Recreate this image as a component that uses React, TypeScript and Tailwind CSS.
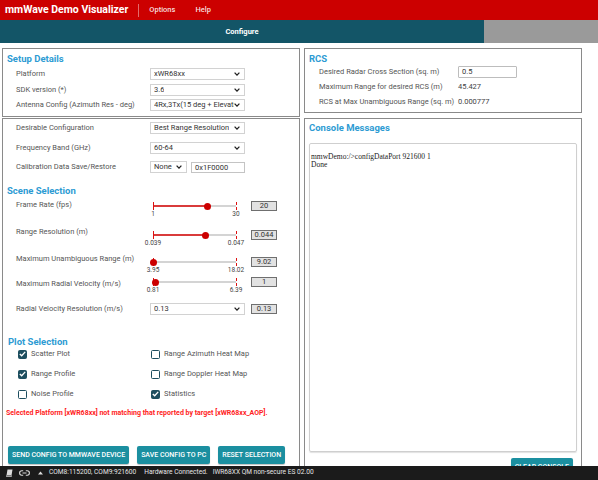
import React from "react";

function Chevron() {
  return (
    <svg width="6" height="4" viewBox="0 0 6 4" className="shrink-0">
      <path d="M0.6 0.6 L3 3.1 L5.4 0.6" fill="none" stroke="#222" strokeWidth="1.3" />
    </svg>
  );
}

function Select({ value, narrow }: { value: string; narrow?: boolean }) {
  return (
    <div
      className={`${narrow ? "w-[37px]" : "w-[95px]"} h-[12px] shrink-0 border border-[#d2d2d2] bg-white flex items-center justify-between pl-[3px] pr-[4px] text-[7.5px] text-[#333] leading-none overflow-hidden`}
    >
      <span className="whitespace-nowrap overflow-hidden">{value}</span>
      <Chevron />
    </div>
  );
}

function ValBox({ v }: { v: string }) {
  return (
    <div className="w-[26px] h-[10px] shrink-0 border border-[#6f6f6f] bg-[#e2e2e2] text-[7.5px] leading-[8px] text-center text-[#333]">
      {v}
    </div>
  );
}

function Slider({ frac, min, max, v }: { frac: number; min: string; max: string; v: string }) {
  const L = 3;
  const R = 86;
  const x = L + frac * (R - L);
  return (
    <div className="flex items-start">
      <div className="relative w-[95px] h-[20px] shrink-0">
        <div className="absolute top-[6px] h-[2px] bg-[#d4d4d4]" style={{ left: L, width: R - L }} />
        <div className="absolute top-[6px] h-[2px] bg-[#d93b3b]" style={{ left: L, width: x - L }} />
        <div className="absolute left-[3px] top-[3px] w-[1px] h-[8px] bg-[#d11]" />
        <div className="absolute left-[86px] top-[3px] w-[1px] h-[8px] border-l border-dashed border-[#d11]" />
        <div
          className="absolute w-[7px] h-[7px] rounded-full bg-[#cc0000]"
          style={{ left: x - 3.5, top: 3.5 }}
        />
        <div className="absolute left-[3px] top-[10px] -translate-x-1/2 text-[6.5px] leading-[10px] text-[#444] whitespace-nowrap">
          {min}
        </div>
        <div className="absolute left-[86px] top-[10px] -translate-x-1/2 text-[6.5px] leading-[10px] text-[#444] whitespace-nowrap">
          {max}
        </div>
      </div>
      <div className="ml-[6px] mt-[2px]">
        <ValBox v={v} />
      </div>
    </div>
  );
}

function Check({ on, label }: { on: boolean; label: string }) {
  return (
    <div className="flex items-center h-[12px] w-[133px]">
      <div
        className={`w-[9px] h-[9px] rounded-[1.5px] border-[1.5px] border-[#1d4e5f] flex items-center justify-center ${on ? "bg-[#1d4e5f]" : "bg-white"}`}
      >
        {on && (
          <svg width="7" height="6" viewBox="0 0 7 6">
            <path d="M0.8 3 L2.7 4.8 L6.2 0.9" fill="none" stroke="white" strokeWidth="1.3" />
          </svg>
        )}
      </div>
      <span className="ml-[4px] text-[7.5px] text-[#555] leading-none">{label}</span>
    </div>
  );
}

function Heading({ children, cls }: { children: React.ReactNode; cls?: string }) {
  return (
    <div className={`text-[9.5px] font-bold leading-[12px] text-[#2d9bd3] ${cls ?? ""}`}>{children}</div>
  );
}

function Label({ children, w }: { children: React.ReactNode; w?: boolean }) {
  return (
    <div className={`${w ? "w-[139px]" : "w-[134px]"} shrink-0 text-[7.5px] text-[#555] leading-[12px] whitespace-nowrap`}>
      {children}
    </div>
  );
}

function Btn({ children }: { children: React.ReactNode }) {
  return (
    <div className="h-[18px] px-[4px] rounded-[2px] bg-[#1b8fa0] text-white text-[7px] font-medium leading-[18px] whitespace-nowrap shadow-[0_1px_1px_rgba(0,0,0,0.25)]">
      {children}
    </div>
  );
}

export default function App() {
  return (
    <div className="w-[598px] h-[480px] flex flex-col overflow-hidden bg-white [font-family:Roboto,'Liberation_Sans',sans-serif]">
      {/* header */}
      <div className="h-[20px] shrink-0 bg-[#cc0000] flex items-center">
        <div className="pl-[5px] text-[10.5px] font-bold text-white leading-none whitespace-nowrap">mmWave Demo Visualizer</div>
        <div className="ml-[10px] w-[1px] h-[13px] bg-[#e36b6b]" />
        <div className="ml-[10px] text-[7.5px] text-[#f6dede] font-medium">Options</div>
        <div className="ml-[20px] text-[7.5px] text-[#f6dede] font-medium">Help</div>
      </div>
      {/* nav */}
      <div className="h-[23px] shrink-0 flex">
        <div className="w-[484px] bg-[#135567] flex items-center justify-center">
          <span className="text-[7.5px] font-bold text-white">Configure</span>
        </div>
        <div className="flex-1 bg-[#9a9a9a]" />
      </div>
      {/* main */}
      <div className="flex-1 overflow-hidden pt-[5px] pl-[2px]">
        <div className="grid grid-cols-[298px_278px] gap-x-[4px] gap-y-[1px] items-start">
          {/* Setup Details */}
          <div className="border border-[#8a8a8a] pt-[4px] pb-[5px] pl-[4px]">
            <Heading>Setup Details</Heading>
            <div className="pl-[9px]">
              <div className="flex items-center mt-[3px]">
                <Label>Platform</Label>
                <Select value="xWR68xx" />
              </div>
              <div className="flex items-center mt-[4px]">
                <Label>SDK version (*)</Label>
                <Select value="3.6" />
              </div>
              <div className="flex items-center mt-[3px]">
                <Label>Antenna Config (Azimuth Res - deg)</Label>
                <Select value="4Rx,3Tx(15 deg + Elevation)" />
              </div>
            </div>
          </div>
          {/* RCS */}
          <div className="border border-[#8a8a8a] pt-[4px] pb-[4px] pl-[4px]">
            <Heading>RCS</Heading>
            <div className="pl-[10px]">
              <div className="flex items-center mt-[1px]">
                <Label w>Desired Radar Cross Section (sq. m)</Label>
                <div className="w-[59px] h-[12px] border border-[#bdbdbd] rounded-[1px] bg-white pl-[3px] text-[7.5px] leading-[10px] text-[#333]">0.5</div>
              </div>
              <div className="flex items-center mt-[3px]">
                <Label w>Maximum Range for desired RCS (m)</Label>
                <span className="text-[7.5px] text-[#444]">45.427</span>
              </div>
              <div className="flex items-center mt-[3px]">
                <Label w>RCS at Max Unambiguous Range (sq. m)</Label>
                <span className="text-[7.5px] text-[#444]">0.000777</span>
              </div>
            </div>
          </div>
          {/* left main panel */}
          <div className="border border-[#8a8a8a] pt-[3px] pb-[20px]">
            <div className="pl-[13px]">
              <div className="flex items-center h-[12px]">
                <Label>Desirable Configuration</Label>
                <Select value="Best Range Resolution" />
              </div>
              <div className="flex items-center h-[12px] mt-[8px]">
                <Label>Frequency Band (GHz)</Label>
                <Select value="60-64" />
              </div>
              <div className="flex items-center h-[12px] mt-[7px]">
                <Label>Calibration Data Save/Restore</Label>
                <Select value="None" narrow />
                <div className="ml-[4px] w-[54px] h-[11px] border border-[#c4c4c4] bg-white pl-[3px] text-[7.5px] leading-[9px] text-[#333]">0x1F0000</div>
              </div>
            </div>
            <Heading cls="mt-[12px] pl-[4px]">Scene Selection</Heading>
            <div className="pl-[13px] mt-[2px]">
              <div className="flex items-start h-[27px]">
                <Label>Frame Rate (fps)</Label>
                <div className="mt-[0px]">
                  <Slider frac={0.655} min="1" max="30" v="20" />
                </div>
              </div>
              <div className="flex items-start h-[27px]">
                <Label>Range Resolution (m)</Label>
                <div className="mt-[2px]">
                  <Slider frac={0.63} min="0.039" max="0.047" v="0.044" />
                </div>
              </div>
              <div className="flex items-start h-[25px]">
                <Label>Maximum Unambiguous Range (m)</Label>
                <div className="mt-[2px]">
                  <Slider frac={0.01} min="3.95" max="18.02" v="9.02" />
                </div>
              </div>
              <div className="flex items-start h-[25px]">
                <Label>Maximum Radial Velocity (m/s)</Label>
                <div className="-mt-[3px]">
                  <Slider frac={0.035} min="0.81" max="6.39" v="1" />
                </div>
              </div>
              <div className="flex items-center h-[12px]">
                <Label>Radial Velocity Resolution (m/s)</Label>
                <Select value="0.13" />
                <div className="ml-[6px]">
                  <ValBox v="0.13" />
                </div>
              </div>
            </div>
            <Heading cls="mt-[21px] pl-[5px] leading-[11px]">Plot Selection</Heading>
            <div className="pl-[15px]">
              <div className="flex">
                <Check on label="Scatter Plot" />
                <Check on={false} label="Range Azimuth Heat Map" />
              </div>
              <div className="flex mt-[8px]">
                <Check on label="Range Profile" />
                <Check on={false} label="Range Doppler Heat Map" />
              </div>
              <div className="flex mt-[8px]">
                <Check on={false} label="Noise Profile" />
                <Check on label="Statistics" />
              </div>
            </div>
            <div className="mt-[7px] pl-[3px] text-[7px] font-bold leading-[12px] text-[#ff2222] whitespace-nowrap">
              Selected Platform [xWR68xx] not matching that reported by target [xWR68xx_AOP].
            </div>
            <div className="mt-[27px] pl-[5px] flex gap-[8px]">
              <Btn>SEND CONFIG TO MMWAVE DEVICE</Btn>
              <Btn>SAVE CONFIG TO PC</Btn>
              <Btn>RESET SELECTION</Btn>
            </div>
          </div>
          {/* console */}
          <div className="border border-[#8a8a8a] pt-[3px] px-[4px] pb-[10px]">
            <Heading>Console Messages</Heading>
            <div className="mt-[9px] h-[309px] border border-[#cfcfcf] rounded-[2px] shadow-[0_1px_1px_rgba(0,0,0,0.12)] pt-[9px] pl-[1px] [font-family:'Liberation_Serif',serif] text-[7.5px] leading-[8px] text-[#222]">
              <div>mmwDemo:/&gt;configDataPort 921600 1</div>
              <div>Done</div>
            </div>
            <div className="flex justify-end mt-[6px] pr-[4px]">
              <Btn>CLEAR CONSOLE</Btn>
            </div>
          </div>
        </div>
      </div>
      {/* status bar */}
      <div className="h-[14px] shrink-0 bg-[#1b1b1b] flex items-center text-[6.6px] text-[#e6e6e6] whitespace-nowrap">
        <svg width="7" height="8" viewBox="0 0 7 8" className="ml-[6px]">
          <path d="M1.5 0.5 H6.5 L5.5 6.5 H0.5 Z" fill="#dcdcdc" />
          <path d="M0.5 6.5 L0.4 7.6 H5.4 L5.5 6.5" fill="none" stroke="#dcdcdc" strokeWidth="0.8" />
        </svg>
        <svg width="11" height="6" viewBox="0 0 11 6" className="ml-[6px]">
          <path d="M4.2 0.8 H2.8 A2.2 2.2 0 0 0 2.8 5.2 H4.2 M6.8 0.8 H8.2 A2.2 2.2 0 0 1 8.2 5.2 H6.8 M3.5 3 H7.5" fill="none" stroke="#dcdcdc" strokeWidth="1.1" />
        </svg>
        <svg width="5" height="4" viewBox="0 0 5 4" className="ml-[8px]">
          <path d="M0 3.5 L2.5 0.5 L5 3.5 Z" fill="#dcdcdc" />
        </svg>
        <span className="ml-[6px]">COM8:115200, COM9:921600</span>
        <span className="ml-[8px]">Hardware Connected.</span>
        <span className="ml-[5px]">IWR68XX QM non-secure ES 02.00</span>
      </div>
    </div>
  );
}
